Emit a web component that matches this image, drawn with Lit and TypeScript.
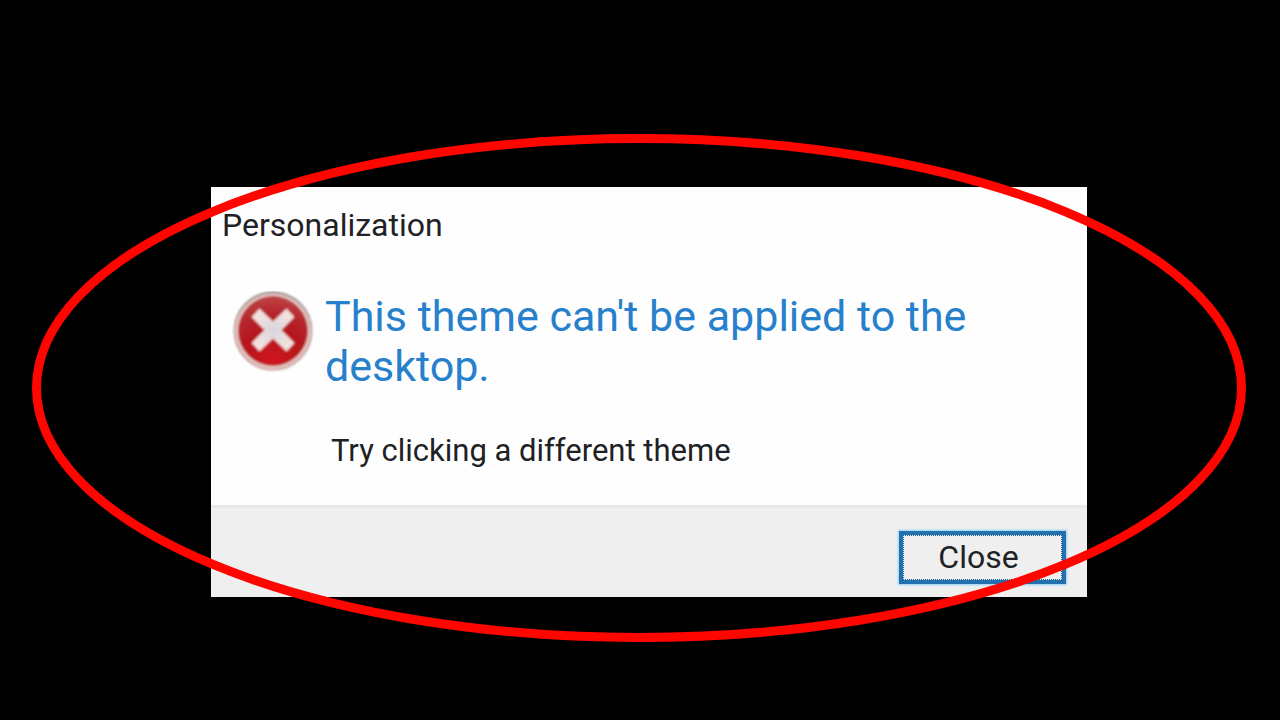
import { LitElement, html, css } from "lit";
import { customElement, property } from "lit/decorators.js";

@customElement("error-icon")
class ErrorIcon extends LitElement {
  static styles = css`
    :host { display: block; }
    .icon { display: block; width: 100%; height: auto; }
  `;
  render() {
    return html`<svg class="icon" viewBox="0 0 84 84" role="img" aria-label="Error">
      <defs>
        <radialGradient id="red" cx="0.5" cy="0.95" r="0.95">
          <stop offset="0" stop-color="#d0121a" />
          <stop offset="0.45" stop-color="#b6141c" />
          <stop offset="0.75" stop-color="#b4262c" />
          <stop offset="1" stop-color="#bf4446" />
        </radialGradient>
        <linearGradient id="rim" x1="0" y1="0" x2="0" y2="1">
          <stop offset="0" stop-color="#8f8683" />
          <stop offset="0.5" stop-color="#c4a5a3" />
          <stop offset="1" stop-color="#c9a3a0" />
        </linearGradient>
        <radialGradient id="cross" cx="0.5" cy="0.5" r="0.6">
          <stop offset="0" stop-color="#d8d6e0" />
          <stop offset="0.6" stop-color="#ecdfdf" />
          <stop offset="1" stop-color="#f6e4de" />
        </radialGradient>
        <filter id="soft" x="-10%" y="-10%" width="120%" height="120%">
          <feGaussianBlur stdDeviation="0.9" />
        </filter>
      </defs>
      <g filter="url(#soft)">
        <circle cx="42" cy="40" r="38.5" fill="#ecc9c5" stroke="url(#rim)" stroke-width="2" />
        <circle cx="42" cy="40" r="34.5" fill="url(#red)" stroke="#a9373a" stroke-width="1" />
        <path
          d="M28.5 18.5 L42 31.5 L55.5 18.5 L62.5 26 L49.5 39 L62.5 52 L55.5 59.5 L42 46.5 L28.5 59.5 L21.5 52 L34.5 39 L21.5 26 Z"
          fill="url(#cross)" stroke="#efd6d2" stroke-width="1.5" stroke-linejoin="round" />
      </g>
    </svg>`;
  }
}

@customElement("message-dialog")
class MessageDialog extends LitElement {
  static styles = css`
    :host {
      display: block;
      background: #fefefe;
      color: #202124;
      font-size: 31px;
      line-height: 40px;
    }
    .caption {
      margin: 0;
      padding: 18px 11px 0;
      font-size: 32px;
      font-weight: 400;
      line-height: 40px;
    }
    .body {
      display: grid;
      grid-template-columns: 84px 1fr;
      column-gap: 10px;
      padding: 46px 80px 34px 20px;
    }
    .headline {
      margin: 0;
      color: #2680cb;
      font-size: 43px;
      font-weight: 400;
      line-height: 50px;
    }
    .hint { margin: 0; padding: 40px 6px 0; }
    .footer {
      display: flex;
      justify-content: flex-end;
      padding: 23px 21px 13px;
      border-top: 3px solid #e8e8e8;
      background: #efefef;
    }
    .close {
      width: 167px;
      height: 53px;
      padding: 0 8px 2px 0;
      border: 4px solid #2270ae;
      outline: 1px dotted #1d5f98;
      outline-offset: -5px;
      box-shadow: 0 0 2px 1px #8fd0f8;
      background: #efefef;
      color: #202124;
      font: inherit;
      font-size: 32px;
      line-height: 40px;
    }
  `;
  @property() caption = "";
  @property() headline = "";
  @property() hint = "";

  render() {
    return html`
      <h1 class="caption">${this.caption}</h1>
      <div class="body">
        <error-icon></error-icon>
        <div>
          <h2 class="headline">${this.headline}</h2>
          <p class="hint">${this.hint}</p>
        </div>
      </div>
      <div class="footer"><button class="close" type="button">Close</button></div>
    `;
  }
}

@customElement("app-root")
class AppRoot extends LitElement {
  static styles = css`
    :host {
      display: block;
      position: relative;
      box-sizing: border-box;
      min-height: 100vh;
      padding: 187px 193px 0 211px;
      background: #000;
      font-family: Roboto, sans-serif;
    }
    .ring {
      position: absolute;
      inset: 0;
      width: 100%;
      height: 100%;
      pointer-events: none;
    }
  `;
  render() {
    return html`
      <message-dialog
        role="dialog"
        aria-label="Personalization"
        caption="Personalization"
        headline="This theme can't be applied to the desktop."
        hint="Try clicking a different theme"
      ></message-dialog>
      <svg class="ring" viewBox="0 0 1280 720" preserveAspectRatio="none" aria-hidden="true">
        <ellipse cx="639" cy="388" rx="602.5" ry="249.5" fill="none" stroke="#ff0500" stroke-width="9" />
      </svg>
    `;
  }
}
